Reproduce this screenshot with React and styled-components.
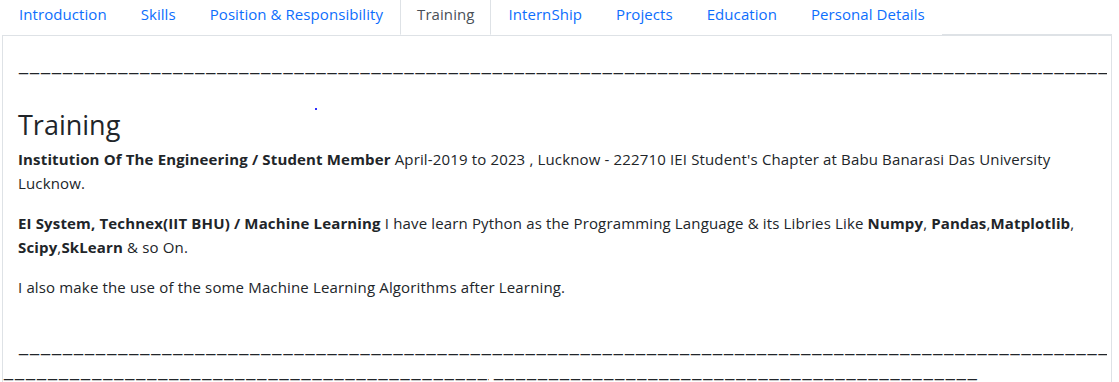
import React from "react";
import styled, { createGlobalStyle } from "styled-components";

const GlobalStyle = createGlobalStyle`
  html, body {
    margin: 0;
    padding: 0;
    background: #fff;
    overflow: hidden;
  }
  body {
    font-family: "Open Sans", "Liberation Sans", sans-serif;
    font-size: 15px;
    line-height: 24px;
    letter-spacing: 0.15px;
    color: #212529;
  }
`;

const tabs = [
  "Introduction",
  "Skills",
  "Position & Responsibility",
  "Training",
  "InternShip",
  "Projects",
  "Education",
  "Personal Details",
];

const Page = styled.div`
  margin-top: -7px;
  padding-left: 2px;
  width: 1110px;
`;

const Tabs = styled.ul`
  display: flex;
  margin: 0;
  padding: 0;
  list-style: none;
  border-bottom: 1px solid #dee2e6;
`;

const Tab = styled.li`
  margin-bottom: -1px;
  padding: 8px 16px;
  border: 1px solid ${(p) => (p.$active ? "#dee2e6" : "transparent")};
  border-bottom-color: ${(p) => (p.$active ? "#fff" : "transparent")};
  border-radius: 4px 4px 0 0;
  background: #fff;
  color: ${(p) => (p.$active ? "#495057" : "#0d6efd")};
  letter-spacing: 0.07px;
  white-space: nowrap;
  cursor: pointer;
`;

const Panel = styled.div`
  border: 1px solid #dee2e6;
  height: 400px;
  overflow: hidden;
`;

const Body = styled.div`
  padding: 8px 4px 0 15px;
`;

const Rule = styled.div`
  font-family: "Lato", sans-serif;
  font-size: 24px;
  line-height: 36px;
  height: 36px;
  letter-spacing: 0;
  white-space: nowrap;
  overflow: hidden;
  margin-top: ${(p) => p.$top || 0}px;
`;

const Heading = styled.h2`
  position: relative;
  margin: 29px 0 6px;
  font-size: 27px;
  font-weight: 500;
  line-height: 1.2;
  letter-spacing: 0;
`;

const Dot = styled.span`
  position: absolute;
  left: 297px;
  top: -1px;
  width: 2px;
  height: 2px;
  background: #3030ff;
`;

const Para = styled.p`
  margin: 0 0 16px;
`;

const Tail = styled.div`
  display: flex;
  gap: 4px;
  margin-top: -4px;
  font-family: "Lato", sans-serif;
  font-size: 24px;
  line-height: 22px;
  letter-spacing: 0;
`;

const TailSeg = styled.span`
  display: block;
  width: ${(p) => p.$w}px;
  padding-bottom: 8px;
  white-space: nowrap;
  overflow: hidden;
`;

const bar = (n) => "_".repeat(n);

export default function App() {
  return (
    <>
      <GlobalStyle />
      <Page>
        <Tabs>
          {tabs.map((t) => (
            <Tab key={t} $active={t === "Training"}>
              {t}
            </Tab>
          ))}
        </Tabs>
        <Panel>
          <Body>
            <Rule>{bar(120)}</Rule>
            <Heading>
              <Dot />
              Training
            </Heading>
            <Para>
              <b>Institution Of The Engineering / Student Member</b> April-2019
              to 2023 , Lucknow - 222710 IEI Student's Chapter at Babu Banarasi
              Das University Lucknow.
            </Para>
            <Para>
              <b>EI System, Technex(IIT BHU) / Machine Learning</b> I have learn
              Python as the Programming Language &amp; its Libries Like{" "}
              <b>Numpy</b>, <b>Pandas</b>,<b>Matplotlib</b>, <b>Scipy</b>,
              <b>SkLearn</b> &amp; so On.
            </Para>
            <Para>
              I also make the use of the some Machine Learning Algorithms after
              Learning.
            </Para>
            <Rule $top={26}>{bar(120)}</Rule>
          </Body>
          <Tail>
            <TailSeg $w={486}>{bar(60)}</TailSeg>
            <TailSeg $w={485}>{bar(60)}</TailSeg>
          </Tail>
        </Panel>
      </Page>
    </>
  );
}
